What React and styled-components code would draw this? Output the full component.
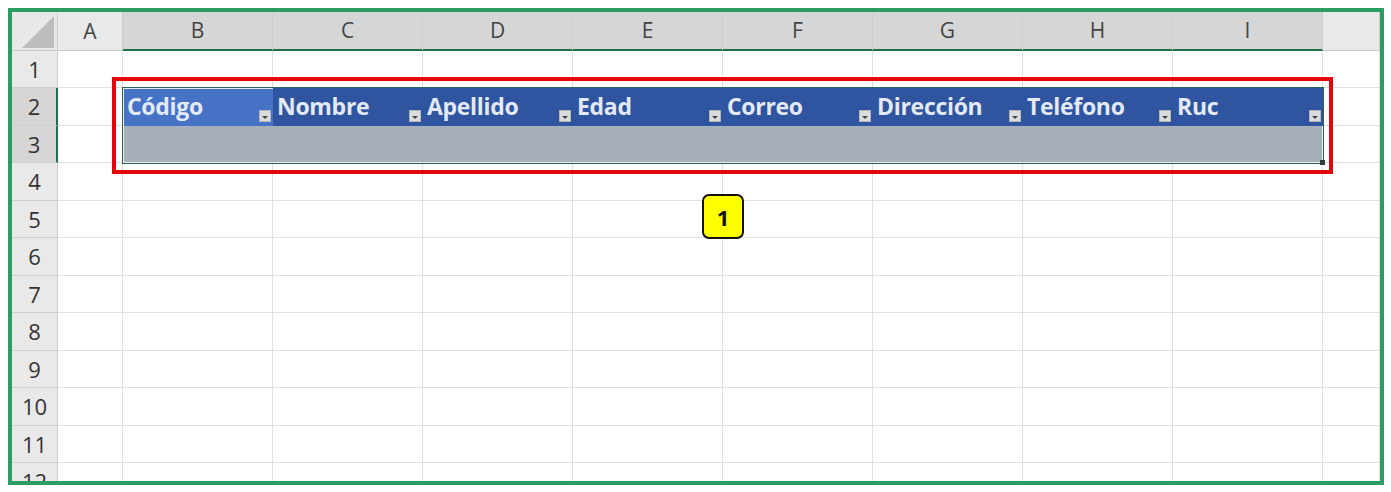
import React from "react";
import styled, { createGlobalStyle, css } from "styled-components";

const Global = createGlobalStyle`
  html, body { margin: 0; padding: 0; background: #ffffff; }
  body { width: 1391px; height: 492px; overflow: hidden; }
`;

const Frame = styled.div`
  position: relative;
  margin: 8px 0 0 8px;
  width: 1368px;
  height: 469px;
  border: 4px solid #2a9d62;
  overflow: hidden;
  background: #fff;
`;

const Sheet = styled.div`
  display: grid;
  grid-template-columns: 46px 65px repeat(8, 150px) 57px;
  grid-template-rows: 38.5px repeat(12, 37.5px);
  font-family: "Open Sans", "Noto Sans", sans-serif;
`;

const Corner = styled.div`
  position: relative;
  background: #e8e8e8;
  border-right: 1px solid #d0d0d0;
  border-bottom: 1px solid #c8c8c8;
  svg { position: absolute; right: 3px; bottom: 2px; }
`;

const ColHead = styled.div`
  display: flex;
  align-items: center;
  justify-content: center;
  font-size: 21px;
  color: #444;
  background: ${(p) => (p.$sel ? "#d6d6d6" : "#e9e9e9")};
  border-right: 1px solid #cdcdcd;
  border-bottom: ${(p) => (p.$sel ? "2px solid #1f7148" : "1px solid #c8c8c8")};
  box-sizing: border-box;
`;

const RowHead = styled.div`
  display: flex;
  align-items: center;
  justify-content: center;
  font-size: 22px;
  color: #333;
  background: ${(p) => (p.$sel ? "#d6d6d6" : "#e9e9e9")};
  border-bottom: 1px solid #cfcfcf;
  border-right: ${(p) => (p.$sel ? "2px solid #1f7148" : "1px solid #cdcdcd")};
  box-sizing: border-box;
`;

const Cell = styled.div`
  border-right: 1px solid #e0e0e0;
  border-bottom: 1px solid #e0e0e0;
  box-sizing: border-box;
`;

const Table = styled.div`
  grid-column: span 8;
  grid-row: span 2;
  display: grid;
  grid-template-columns: repeat(8, 1fr);
  grid-template-rows: 38px 1fr;
  position: relative;
  outline: 1px solid #2f6152;
  box-shadow: inset 0 0 0 1px #e8efe9;
  background: #a7afbb;
`;

const HeadCell = styled.div`
  position: relative;
  display: flex;
  align-items: center;
  padding-left: 4px;
  padding-bottom: 2px;
  font-family: "Open Sans", "Noto Sans", sans-serif;
  font-weight: 700;
  font-size: 23px;
  letter-spacing: -0.3px;
  color: #e3e9f5;
  white-space: nowrap;
  background: ${(p) => (p.$active ? "#4673c6" : "#2f55a0")};
  ${(p) =>
    p.$first &&
    css`
      box-shadow: inset 1px 1px 0 #e8efe9;
    `}
`;

const Filter = styled.span`
  position: absolute;
  right: 2px;
  bottom: 4px;
  width: 12px;
  height: 12px;
  box-sizing: border-box;
  background: #dcdcdc;
  border: 1px solid #b4b4b4;
  display: flex;
  align-items: center;
  justify-content: center;
  &::after {
    content: "";
    border-left: 3px solid transparent;
    border-right: 3px solid transparent;
    border-top: 3px solid #444;
    margin-top: 2px;
  }
`;

const BodyRow = styled.div`
  grid-column: 1 / -1;
`;

const Handle = styled.span`
  position: absolute;
  right: -2px;
  bottom: -2px;
  width: 5px;
  height: 5px;
  background: #2c3e3a;
`;

const RedBox = styled.div`
  position: absolute;
  left: 100px;
  top: 65px;
  width: 1221px;
  height: 97px;
  box-sizing: border-box;
  border: 4px solid #e5060b;
  pointer-events: none;
`;

const Badge = styled.div`
  position: absolute;
  left: 690px;
  top: 182px;
  width: 42px;
  height: 45px;
  box-sizing: border-box;
  border: 2px solid #111;
  border-radius: 7px;
  background: #ffff00;
  display: flex;
  align-items: center;
  justify-content: center;
  font-family: "Open Sans", "Noto Sans", sans-serif;
  font-weight: 700;
  font-size: 22px;
  color: #111;
`;

const cols = ["B", "C", "D", "E", "F", "G", "H", "I"];
const heads = ["Código", "Nombre", "Apellido", "Edad", "Correo", "Dirección", "Teléfono", "Ruc"];

export default function App() {
  const rows = [];
  for (let r = 1; r <= 12; r++) {
    const sel = r === 2 || r === 3;
    rows.push(
      <RowHead key={`rh${r}`} $sel={sel}>
        {r}
      </RowHead>
    );
    rows.push(<Cell key={`a${r}`} />);
    if (r === 2) {
      rows.push(
        <Table key="table">
          {heads.map((h, i) => (
            <HeadCell key={h} $active={i === 0} $first={i === 0}>
              {h}
              <Filter />
            </HeadCell>
          ))}
          <BodyRow />
          <Handle />
        </Table>
      );
    } else if (r !== 3) {
      cols.forEach((c) => rows.push(<Cell key={`${c}${r}`} />));
    }
    rows.push(<Cell key={`z${r}`} />);
  }

  return (
    <>
      <Global />
      <Frame>
        <Sheet>
          <Corner>
            <svg width="32" height="32" viewBox="0 0 32 32">
              <polygon points="32,0 32,32 0,32" fill="#bdbdbd" />
            </svg>
          </Corner>
          <ColHead>A</ColHead>
          {cols.map((c) => (
            <ColHead key={c} $sel>
              {c}
            </ColHead>
          ))}
          <ColHead />
          {rows}
        </Sheet>
        <RedBox />
        <Badge>1</Badge>
      </Frame>
    </>
  );
}
